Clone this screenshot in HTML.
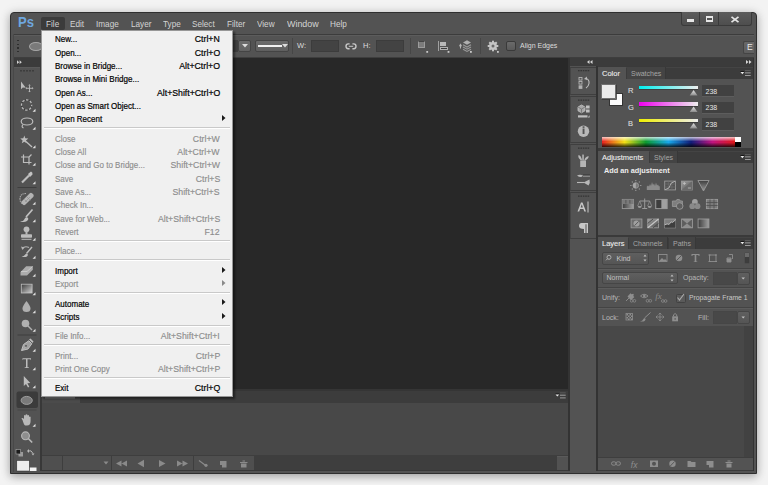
<!DOCTYPE html>
<html><head><meta charset="utf-8">
<style>
*{margin:0;padding:0;box-sizing:border-box}
html,body{width:768px;height:485px;overflow:hidden;background:#f3f3f3;font-family:"Liberation Sans",sans-serif;}
.a{position:absolute}
#win{left:10px;top:12px;width:747px;height:462px;background:#535353;border:1px solid #2f2f2f;border-radius:4px 4px 0 0;box-shadow:0 3px 9px rgba(0,0,0,0.28),0 0 12px rgba(0,0,0,0.10)}
.mt{color:#d4d4d4;font-size:9.2px;line-height:10px;top:19px;transform:scaleX(0.89);transform-origin:0 0}
#opt{left:14px;top:34px;width:740px;height:24px;background:#535353;border-top:1px solid #3c3c3c}
#doc{left:42px;top:58px;width:526px;height:331px;background:#282828}
.hdr{background:#3b3b3b}
.sep{width:1px;background:#464646}
.ot{color:#dcdcdc;font-size:7px;line-height:8px}
.inp{background:#434343;border:1px solid #3c3c3c}

.menu{left:41px;top:30px;width:192px;height:367px;background:#f0f0f0;border:1px solid #979797;box-shadow:2px 2px 2px rgba(0,0,0,0.45)}
.mi{left:55px;font-size:9px;line-height:10px;color:#000;white-space:nowrap;transform:scaleX(0.89);transform-origin:0 0;-webkit-text-stroke:0.2px #000}
.mi.dis{color:#8d8d8d;-webkit-text-stroke:0.15px #8d8d8d}
.sc{left:auto;right:548px;text-align:right;transform:scaleX(0.97);transform-origin:100% 0}
.msep{left:44px;width:186px;height:1px;background:#c9c9c9;border-bottom:1px solid #fff;box-sizing:content-box}

.grp{left:570px;width:26px;background:#535353;border-top:1px solid #3f3f3f;border-bottom:1px solid #3f3f3f;border-left:1px solid #454545}

.tabbar{left:598px;width:155px;background:#3c3c3c;border-top:1px solid #444}
.tab{height:12px;background:#444;color:#a6a6a6;font-size:7px;line-height:13px;padding-left:4px;white-space:nowrap;border-right:1px solid #383838;overflow:hidden}
.tab.act{background:#535353;color:#ececec;font-size:7.5px;line-height:13px;border:none;-webkit-text-stroke:0.1px #ececec}
.pbody{left:598px;width:155px;background:#535353}
.lbl{font-size:7.5px;color:#d8d8d8;line-height:8px;-webkit-text-stroke:0.15px #d8d8d8}
.inp2{left:702px;width:32px;background:#414141;border-bottom:1px solid #5d5d5d}
.num{left:705.5px;font-size:7px;color:#e6e6e6;line-height:8px}
.dd{background:linear-gradient(#5f5f5f,#555);border:1px solid #464646;border-radius:2px}
.ltx{font-size:7px;line-height:8px;white-space:nowrap}
</style></head><body>
<div id="win" class="a"></div>
<!-- Ps logo -->
<div class="a" style="left:18.3px;top:14px;font-size:14.5px;line-height:16px;font-weight:bold;color:#6ea6df;transform:scaleX(0.9);transform-origin:0 0">Ps</div>
<!-- menu bar -->
<div class="a" style="left:41px;top:17px;width:24px;height:13px;background:#3b3b3b;border-radius:2px"></div>
<div class="a mt" style="left:46px">File</div>
<div class="a mt" style="left:70px">Edit</div>
<div class="a mt" style="left:96px">Image</div>
<div class="a mt" style="left:131px">Layer</div>
<div class="a mt" style="left:162.5px">Type</div>
<div class="a mt" style="left:192px">Select</div>
<div class="a mt" style="left:226.5px">Filter</div>
<div class="a mt" style="left:257px">View</div>
<div class="a mt" style="left:287px;transform:scaleX(0.97)">Window</div>
<div class="a mt" style="left:330px">Help</div>
<!-- window controls -->
<div class="a" style="left:681px;top:12px;width:71px;height:14px;background:linear-gradient(#5c5c5c,#4e4e4e);border:1px solid #3a3a3a;border-top:none;border-radius:0 0 3px 3px"></div>
<div class="a" style="left:699px;top:12px;width:1px;height:13px;background:#3a3a3a"></div>
<div class="a" style="left:718px;top:12px;width:1px;height:13px;background:#3a3a3a"></div>
<div class="a" style="left:687px;top:19px;width:7px;height:3px;background:#e6e6e6"></div>
<div class="a" style="left:705.5px;top:16px;width:7.5px;height:6px;border:2px solid #e6e6e6;border-left-width:1.8px;border-right-width:1.8px"></div>
<svg class="a" style="left:730px;top:15px" width="10" height="9"><path d="M1.5 1.8L8.5 7.2M8.5 1.8L1.5 7.2" stroke="#e6e6e6" stroke-width="1.7"/></svg>

<!-- options bar -->
<div id="opt" class="a"></div>
<div class="a" style="left:14px;top:35px;width:740px;height:1px;background:#5c5c5c"></div>
<div class="a" style="left:14px;top:57px;width:740px;height:1px;background:#3e3e3e"></div>
<!-- grip dots -->
<div class="a" style="left:17px;top:40px;width:2px;height:13px;background:repeating-linear-gradient(#2e2e2e 0 1.5px,transparent 1.5px 3.5px)"></div>
<!-- ellipse tool icon -->
<div class="a" style="left:29px;top:42px;width:14px;height:9px;border-radius:50%;background:#7a7a7a;border:1px solid #a5a5a5"></div>
<!-- dropdowns -->
<div class="a" style="left:226px;top:40px;width:12px;height:12px;background:#3e3e3e"></div>
<div class="a" style="left:237.5px;top:39.5px;width:13.5px;height:12.5px;background:linear-gradient(#6c6c6c,#626262);border:1px solid #444;border-radius:2px"></div>
<svg class="a" style="left:242px;top:44px" width="6" height="4"><path d="M0 0H6L3 3.5Z" fill="#dcdcdc"/></svg>
<div class="a" style="left:255px;top:40px;width:34px;height:12px;background:linear-gradient(#6b6b6b,#5f5f5f);border:1px solid #444;border-radius:2px"></div>
<div class="a" style="left:258px;top:45px;width:24px;height:2px;background:#f0f0f0"></div>
<svg class="a" style="left:282px;top:44px" width="6" height="4"><path d="M0 0H6L3 3.5Z" fill="#dcdcdc"/></svg>
<div class="a sep" style="left:292px;top:38px;height:16px"></div>
<div class="a ot" style="left:297px;top:42px;font-size:7.5px">W:</div>
<div class="a inp" style="left:311px;top:40px;width:28px;height:12px"></div>
<svg class="a" style="left:0;top:0" width="768" height="485"><path d="M349.6 43.9H348.2Q346 43.9 346 46.3Q346 48.7 348.2 48.7H349.6M352.4 43.9H353.8Q356 43.9 356 46.3Q356 48.7 353.8 48.7H352.4" fill="none" stroke="#c8c8c8" stroke-width="1.4"/><path d="M348.8 46.3H353.2" stroke="#c8c8c8" stroke-width="1"/></svg>
<div class="a ot" style="left:363px;top:42px;font-size:7.5px">H:</div>
<div class="a inp" style="left:376px;top:40px;width:28px;height:12px"></div>
<div class="a sep" style="left:410px;top:38px;height:16px"></div>
<!-- path ops -->
<div class="a" style="left:417.7px;top:40.8px;width:7.6px;height:7.4px;background:#7c7c7c;border:1px solid #9c9c9c;border-top-color:#444"></div>
<svg class="a" style="left:0;top:0" width="768" height="485"><g fill="#c8c8c8"><rect x="426.3" y="51" width="1.8" height="1.8"/><rect x="447.6" y="51" width="1.8" height="1.8"/><rect x="470" y="51" width="1.8" height="1.8"/><rect x="497" y="51" width="1.8" height="1.8"/></g></svg>
<!-- align -->
<div class="a" style="left:438px;top:41px;width:1px;height:9.5px;background:#a0a0a0"></div>
<div class="a" style="left:440px;top:42px;width:5.5px;height:3.5px;background:#b8b8b8"></div>
<div class="a" style="left:440px;top:46.8px;width:8px;height:3.5px;background:#3c3c3c;border:1px solid #b0b0b0"></div>

<!-- arrange -->
<svg class="a" style="left:0;top:0" width="768" height="485"><path d="M460.5 48.5V44.5M459 45.8H462" stroke="#c0c0c0" stroke-width="0.9"/><path d="M459.5 44.8L460.5 43.5L461.5 44.8Z" fill="#c0c0c0"/>
<path d="M463 42.5L467 40.3L471 42.5L467 44.7Z" fill="#b0b0b0"/>
<path d="M463 44.8L467 47L471 44.8M463 47L467 49.2L471 47M463 49.2L467 51.4L471 49.2" fill="none" stroke="#9a9a9a" stroke-width="1.1"/></svg>
<div class="a sep" style="left:480px;top:38px;height:16px"></div>
<!-- gear -->
<svg class="a" style="left:0;top:0" width="768" height="485"><g fill="#c4c4c4"><circle cx="493" cy="46" r="3.9"/><rect x="492.00" y="40.70" width="2" height="2.2" transform="rotate(0 493 46)"/><rect x="492.00" y="40.70" width="2" height="2.2" transform="rotate(45 493 46)"/><rect x="492.00" y="40.70" width="2" height="2.2" transform="rotate(90 493 46)"/><rect x="492.00" y="40.70" width="2" height="2.2" transform="rotate(135 493 46)"/><rect x="492.00" y="40.70" width="2" height="2.2" transform="rotate(180 493 46)"/><rect x="492.00" y="40.70" width="2" height="2.2" transform="rotate(225 493 46)"/><rect x="492.00" y="40.70" width="2" height="2.2" transform="rotate(270 493 46)"/><rect x="492.00" y="40.70" width="2" height="2.2" transform="rotate(315 493 46)"/></g><circle cx="493" cy="46" r="1.5" fill="#6a6a6a"/></svg>
<div class="a" style="left:506px;top:41px;width:10px;height:10px;background:linear-gradient(#6a6a6a,#5a5a5a);border:1px solid #3a3a3a;border-radius:2px"></div>
<div class="a ot" style="left:520px;top:42px">Align Edges</div>
<div class="a" style="left:742.5px;top:40.5px;width:11px;height:13px;background:linear-gradient(#686868,#5e5e5e);border:1px solid #444;border-right:none;border-radius:2px 0 0 2px"></div>
<div class="a" style="left:747px;top:43px;color:#e8e8e8;font-size:8.5px;line-height:8px">E</div>

<!-- TOOLBAR -->
<div class="a" style="left:14px;top:58px;width:26px;height:8.6px;background:#3b3b3b"></div>
<div class="a" style="left:40px;top:58px;width:2px;height:413px;background:#383838"></div>
<div class="a" style="left:14px;top:67px;width:26px;height:1px;background:#5a5a5a"></div>
<div class="a" style="left:13px;top:34px;width:1px;height:438px;background:#484848"></div>
<svg class="a" style="left:0;top:0" width="768" height="485">
<g fill="#d0d0d0"><path d="M17 60.3L19.2 62.2L17 64.1ZM19.6 60.3L21.8 62.2L19.6 64.1Z"/></g>
<g fill="#3d3d3d"><rect x="20" y="70" width="2" height="1.5"/><rect x="23" y="70" width="2" height="1.5"/><rect x="26" y="70" width="2" height="1.5"/><rect x="29" y="70" width="2" height="1.5"/><rect x="32" y="70" width="2" height="1.5"/></g>
<g fill="#bcbcbc" stroke="#bcbcbc">
<!-- move -->
<path d="M21 81.5V89.2L22.8 87.6L25.8 87.8Z" stroke="none"/>
<path d="M29.5 85.3V91.3M26.5 88.3H32.5" stroke-width="0.9" fill="none"/>
<path d="M28.2 85.6L29.5 84.3L30.8 85.6ZM28.2 91L29.5 92.3L30.8 91ZM26.8 87L25.5 88.3L26.8 89.6ZM32.2 87L33.5 88.3L32.2 89.6Z" stroke="none"/>
</g>
<g fill="none" stroke="#bcbcbc" stroke-width="1.2">
<!-- marquee -->
<circle cx="26.6" cy="105" r="5.1" stroke="#3a3a3a" stroke-width="1.3"/><circle cx="26.6" cy="105" r="5.1" stroke-width="1.3" stroke-dasharray="2.5 1.5" stroke-dashoffset="1.2"/>
<!-- lasso -->
<ellipse cx="27" cy="121.5" rx="5.8" ry="3.5"/>
<path d="M23 124.5Q21 127 23.5 128"/>
</g>
<g fill="#e0e0e0">
<path d="M32.5 111.8L35.5 108.8V111.8Z M32.5 129.8L35.5 126.8V129.8Z M32.5 148.3L35.5 145.3V148.3Z M32.5 165.8L35.5 162.8V165.8Z M32.5 184.3L35.5 181.3V184.3Z"/>
<path d="M32.5 204.8L35.5 201.8V204.8Z M32.5 222.3L35.5 219.3V222.3Z M32.5 240.8L35.5 237.8V240.8Z M32.5 258.8L35.5 255.8V258.8Z M32.5 276.8L35.5 273.8V276.8Z M32.5 295.3L35.5 292.3V295.3Z M32.5 313.3L35.5 310.3V313.3Z M32.5 331.8L35.5 328.8V331.8Z"/>
<path d="M32.5 351.8L35.5 348.8V351.8Z M32.5 370.3L35.5 367.3V370.3Z M32.5 388.3L35.5 385.3V388.3Z M32.5 406.8L35.5 403.8V406.8Z M32.5 426.8L35.5 423.8V426.8Z"/>
</g>
<!-- wand -->
<path d="M24.3 135.5L25.3 138.3L28.3 138.5L26 140.4L26.8 143.3L24.3 141.7L21.8 143.3L22.6 140.4L20.3 138.5L23.3 138.3Z" fill="#bdbdbd"/>
<path d="M26 141.5L32 147" stroke="#bdbdbd" stroke-width="1.4"/>
<!-- crop -->
<path d="M23.5 154.5V162.5H31.5M21 157H29V164.5M29 157L31.5 154.5" fill="none" stroke="#bdbdbd" stroke-width="1.2"/>
<!-- eyedropper -->
<path d="M22 182.5L29 175.5" stroke="#bdbdbd" stroke-width="2.2" fill="none"/>
<path d="M28 174L31 171.5Q33 172.5 32.5 174.5L30 177Z" fill="#c4c4c4"/>
<rect x="17.5" y="187" width="19" height="1" fill="#3e3e3e"/>
<!-- heal -->
<path d="M21.8 201.2L29.8 193.2Q31 192.2 32.3 193.5L33.3 194.6Q34.3 195.8 33.2 197L25.2 204.8Q24 205.8 22.8 204.6L21.8 203.6Q20.8 202.4 21.8 201.2Z" fill="#b4b4b4"/><path d="M24.5 199.5L28 203M27 197L30.5 200.5M25 202L30 197" stroke="#8a8a8a" stroke-width="0.6"/>
<path d="M26 193.5Q20 193.5 20 199Q20 202 22 203.5" fill="none" stroke="#a8a8a8" stroke-width="1.2" stroke-dasharray="1.3 0.8"/>
<!-- brush -->
<path d="M26 217L32.5 209.5" stroke="#c0c0c0" stroke-width="1.7"/>
<path d="M20 221.5Q23.5 221.5 24.5 219Q25.5 216.3 27.6 217.6Q29.2 219.2 27 221Q24.5 222.8 20 221.5Z" fill="#c0c0c0"/>
<!-- stamp -->
<circle cx="26.5" cy="229.3" r="2.9" fill="#bcbcbc"/>
<rect x="25.5" y="231" width="2" height="3.5" fill="#b8b8b8"/>
<rect x="21" y="234.3" width="11" height="3.4" rx="0.8" fill="#bcbcbc"/>
<rect x="21.5" y="238.8" width="10" height="1" fill="#b8b8b8"/>
<!-- history brush -->
<path d="M26.5 253.5L32 247" stroke="#bdbdbd" stroke-width="1.4"/>
<path d="M21.5 256.5Q24 256.5 25 254.8Q26 253 27.5 254Q28.5 255.5 26.5 256.8Q24.5 257.5 21.5 256.5Z" fill="#bdbdbd"/>
<path d="M22 248.5Q25 245.5 29 247.5" fill="none" stroke="#b5b5b5" stroke-width="1.1"/>
<path d="M21 246.5L22.5 250L24.5 247.5Z" fill="#b5b5b5"/>
<!-- eraser -->
<path d="M20.5 272L26.2 266.3H32.8V269.8L27 275.6H20.5Z" fill="#acacac"/>
<path d="M21 271.5H27L32.5 266.5" fill="none" stroke="#cfcfcf" stroke-width="0.8"/>
<!-- gradient -->
<defs><linearGradient id="gr" x1="0" y1="0" x2="1" y2="1"><stop offset="0" stop-color="#3a3a3a"/><stop offset="1" stop-color="#d0d0d0"/></linearGradient></defs>
<rect x="21.3" y="284.2" width="10.8" height="8.8" fill="url(#gr)" stroke="#c0c0c0" stroke-width="0.8"/>
<!-- blur -->
<path d="M26.5 301Q30.5 306 30.5 308.5Q30.5 312 26.5 312Q22.5 312 22.5 308.5Q22.5 306 26.5 301Z" fill="#b0b0b0"/>
<!-- dodge -->
<circle cx="25.5" cy="323.5" r="3.8" fill="#b0b0b0"/>
<path d="M28 326L32 330" stroke="#b0b0b0" stroke-width="1.4"/>
<rect x="17.5" y="334.5" width="19" height="1" fill="#3e3e3e"/>
<!-- pen -->
<path d="M21.5 350.5L23.5 344.5L28.8 340.8L31.8 343.8L28 349Z" fill="#a0a0a0" stroke="#c0c0c0" stroke-width="1"/><circle cx="26" cy="346" r="1" fill="#535353"/>
<path d="M29 339.5L30.5 338.5L33.5 341.5L32.5 343Z" fill="#bdbdbd"/>
<path d="M22 350.5L26 346.5" stroke="#bdbdbd" stroke-width="0.8"/>
<!-- type -->
<path d="M22.5 358.3H31V360.3L30.3 359.3H27.5V367.3H28.8V368H24.7V367.3H26V359.3H23.2L22.5 360.3Z" fill="#bdbdbd"/>
<!-- path selection -->
<path d="M23.8 376V386L26 384L28 387.5L29.3 386.8L27.4 383.3L30.3 383Z" fill="#bdbdbd"/>
<!-- selected ellipse -->
<rect x="16.5" y="391.5" width="21.5" height="16.5" rx="2" fill="#3b3b3b"/>
<ellipse cx="26.7" cy="400.4" rx="5.6" ry="4" fill="#7a7a7a" stroke="#a5a5a5" stroke-width="0.9"/>
<rect x="17.5" y="409.5" width="19" height="1" fill="#464646"/>
<!-- hand -->
<path d="M22.5 420Q21 418.5 21.8 418Q22.7 417.5 24 419V416Q24 415 24.8 415Q25.6 415 25.6 416V418.8V415Q25.6 414.3 26.5 414.3Q27.4 414.3 27.4 415V418.8V415.7Q27.4 415 28.2 415Q29 415 29 415.7V419V417Q29 416.4 29.8 416.4Q30.6 416.4 30.6 417V421Q30.6 425.5 27 425.5H25.5Q24 425.5 22.5 420Z" fill="#b8b8b8"/>
<!-- zoom -->
<circle cx="25.5" cy="435.8" r="3.9" fill="#8e8e8e" stroke="#b8b8b8" stroke-width="1.1"/>
<path d="M28.3 438.5L32.2 442.5" stroke="#b8b8b8" stroke-width="1.6"/>
<!-- default colors -->
<rect x="18.5" y="452" width="4.5" height="4.5" fill="#9a9a9a"/>
<rect x="16" y="449.5" width="4.5" height="4.5" fill="#1c1c1c" stroke="#aaa" stroke-width="0.6"/>
<path d="M28 451Q31.5 449.5 33 453.5" fill="none" stroke="#b8b8b8" stroke-width="1"/>
<path d="M27 451L29 449V453Z M31.5 453.5H34.5L33 455.5Z" fill="#b8b8b8"/>
<!-- swatches -->
<rect x="29.5" y="467.5" width="7" height="3.5" fill="#f4f4f4"/>
<rect x="16.8" y="460.5" width="12.5" height="10.5" fill="#eeeeee" stroke="#2a2a2a" stroke-width="0.5"/>
</svg>

<!-- doc -->
<div id="doc" class="a"></div>
<!-- DOC/TIMELINE -->
<div class="a" style="left:42px;top:389px;width:526px;height:2px;background:#353535"></div>
<div class="a" style="left:42px;top:391px;width:526px;height:12px;background:#3c3c3c"></div>
<div class="a" style="left:42px;top:390px;width:38px;height:13px;background:#4b4b4b"></div>
<div class="a" style="left:42px;top:403px;width:526px;height:52px;background:#484848"></div>
<div class="a" style="left:42px;top:455px;width:526px;height:15px;background:#3e3e3e"></div>
<div class="a" style="left:42px;top:456px;width:20px;height:14px;background:#4f4f4f"></div>
<div class="a" style="left:63px;top:456px;width:48px;height:14px;background:#4f4f4f"></div>
<div class="a" style="left:112px;top:456px;width:81px;height:14px;background:#4f4f4f"></div>
<div class="a" style="left:194px;top:456px;width:60px;height:14px;background:#4f4f4f"></div>
<div class="a" style="left:42px;top:470px;width:526px;height:1px;background:#383838"></div>
<div class="a" style="left:557px;top:456px;width:11px;height:14px;background:#525252;border-top:1px solid #5a5a5a"></div>
<svg class="a" style="left:0;top:0" width="768" height="485">
<g fill="#8a8a8a">
<path d="M103.5 461.5H108.5L106 464.5Z"/>
<path d="M116 463.5L121.5 460.5V466.5Z M121.5 463.5L127 460.5V466.5Z"/>
<path d="M137.5 463.5L144 459.8V467.2Z"/>
<path d="M159 460V467L165.5 463.5Z"/>
<path d="M177 460.5V466.5L182.5 463.5Z M182.5 460.5V466.5L188 463.5Z"/>
<path d="M199 460.5L205 465" stroke="#8a8a8a" stroke-width="1.2"/>
<circle cx="206" cy="465.3" r="1.6"/>
<path d="M220 461H226.5V467.5H222V465H220Z"/>
<path d="M240 462H247.5V463H240Z M241 463.5H246.5V467.5H241Z M242.5 460.5H245V461.5H242.5Z"/>
</g>
<!-- timeline panel menu -->

<rect x="45" y="397" width="30" height="1.5" fill="#a0a0a0" opacity="0.7"/>
</svg>

<!-- ICON STRIP -->
<div class="a" style="left:568px;top:58px;width:2px;height:413px;background:#333"></div>
<div class="a" style="left:570px;top:58px;width:184px;height:8px;background:#3b3b3b"></div>
<div class="a" style="left:596px;top:66px;width:2px;height:405px;background:#333"></div>
<div class="a" style="left:570px;top:66px;width:26px;height:405px;background:#535353"></div>
<div class="a grp" style="top:67px;height:28px"></div>
<div class="a grp" style="top:96px;height:47px"></div>
<div class="a grp" style="top:144px;height:47px"></div>
<div class="a grp" style="top:192px;height:47px"></div>
<svg class="a" style="left:0;top:0" width="768" height="485">
<g fill="#d8d8d8"><path d="M592.5 60L590 62L592.5 64ZM589.5 60L587 62L589.5 64Z"/>
<path d="M746 60L748.5 62L746 64ZM749 60L751.5 62L749 64Z"/></g>
<g fill="#353535"><rect x="578.0" y="70" width="1.6" height="1.3"/><rect x="580.4" y="70" width="1.6" height="1.3"/><rect x="582.8" y="70" width="1.6" height="1.3"/><rect x="585.2" y="70" width="1.6" height="1.3"/><rect x="587.6" y="70" width="1.6" height="1.3"/><rect x="578.0" y="99.5" width="1.6" height="1.3"/><rect x="580.4" y="99.5" width="1.6" height="1.3"/><rect x="582.8" y="99.5" width="1.6" height="1.3"/><rect x="585.2" y="99.5" width="1.6" height="1.3"/><rect x="587.6" y="99.5" width="1.6" height="1.3"/><rect x="578.0" y="147.5" width="1.6" height="1.3"/><rect x="580.4" y="147.5" width="1.6" height="1.3"/><rect x="582.8" y="147.5" width="1.6" height="1.3"/><rect x="585.2" y="147.5" width="1.6" height="1.3"/><rect x="587.6" y="147.5" width="1.6" height="1.3"/><rect x="578.0" y="195.5" width="1.6" height="1.3"/><rect x="580.4" y="195.5" width="1.6" height="1.3"/><rect x="582.8" y="195.5" width="1.6" height="1.3"/><rect x="585.2" y="195.5" width="1.6" height="1.3"/><rect x="587.6" y="195.5" width="1.6" height="1.3"/></g>
<!-- history -->
<g fill="none" stroke="#bcbcbc" stroke-width="0.8"><rect x="579" y="77.5" width="3" height="2.6"/><rect x="579" y="81.5" width="3" height="2.6"/></g>
<rect x="578.6" y="85.3" width="3.8" height="3.6" fill="#b0b0b0"/>
<path d="M586 78.5Q589.5 79.5 589 83.5Q588.5 86.5 586 88" fill="none" stroke="#bcbcbc" stroke-width="1.1"/>
<path d="M584 79L586.8 76.5L587.2 80Z" fill="#bcbcbc"/>
<!-- 3D -->
<path d="M578 107L581.5 105L585 107V110.8L581.5 112.8L578 110.8Z" fill="#a8a8a8" stroke="#c4c4c4" stroke-width="0.8"/>
<path d="M578 107L581.5 109L585 107M581.5 109V112.8" fill="none" stroke="#6a6a6a" stroke-width="0.7"/>
<rect x="586" y="105.5" width="3.6" height="3" fill="#c0c0c0"/><rect x="586" y="109.5" width="3.6" height="3" fill="#c0c0c0"/>
<rect x="578" y="115.3" width="9.5" height="2.2" fill="#c0c0c0"/><path d="M587.8 117.5L589.6 115.3V117.5Z" fill="#c0c0c0"/>
<!-- info -->
<circle cx="583.5" cy="131.3" r="5.7" fill="#b8b8b8"/>
<rect x="582.6" y="128.5" width="1.9" height="5.5" fill="#535353"/><rect x="582.6" y="126.3" width="1.9" height="1.6" fill="#535353"/>
<!-- brush presets -->
<rect x="580.2" y="160.5" width="5.8" height="6.5" fill="#b4b4b4"/>
<path d="M581 160.5Q577.5 157.5 578.5 155Q581 155.5 582 160Z" fill="#b8b8b8"/>
<path d="M582.3 160.5V155Q583 153.5 583.8 155V160.5Z" fill="#b8b8b8"/>
<path d="M584.3 160.5Q585 156.5 588.8 156.3Q588.5 159 584.8 160.8Z" fill="#b8b8b8"/>
<!-- brush panel -->
<path d="M577 175.5Q580 174 583 175.5Q581 178.5 577 175.5Z" fill="#b8b8b8"/>
<path d="M583 176H590" stroke="#b8b8b8" stroke-width="1"/><path d="M583 175H590" stroke="#2e2e2e" stroke-width="0.8"/>
<path d="M577 182.5H584" stroke="#b8b8b8" stroke-width="1.1"/>
<path d="M583.5 182.5L589.5 179.5Q590.5 183 588.5 185.5Z" fill="#b8b8b8"/>
<!-- character -->
<path d="M577.5 211.5L581 202.5H582.5L586 211.5H584.3L583.4 209H580.1L579.2 211.5ZM580.6 207.6H582.9L581.75 204.3Z" fill="#c8c8c8"/>
<rect x="587.5" y="201.5" width="1" height="11" fill="#c8c8c8"/>
<!-- paragraph -->
<path d="M581.5 223H588V233H586.5V224.3H585.5V233H584V229Q579 229 579 226Q579 223 581.5 223Z" fill="#c8c8c8"/>
</svg>

<!-- RIGHT PANELS -->
<div class="a" style="left:598px;top:66px;width:156px;height:405px;background:#3a3a3a"></div>
<div class="a" style="left:753px;top:58px;width:1px;height:413px;background:#333"></div>
<!-- color panel -->
<div class="a tabbar" style="top:67px;height:12px"></div>
<div class="a tab act" style="left:598px;top:67px;width:28px">Color</div>
<div class="a tab" style="left:627px;top:67px;width:39px">Swatches</div>
<div class="a pbody" style="top:79px;height:69px"></div>
<div class="a" style="left:609px;top:92.5px;width:13.5px;height:13.8px;background:#fcfcfc;border:1px solid #333"></div>
<div class="a" style="left:601.3px;top:84.3px;width:14.6px;height:14.6px;background:#ebebeb;border:0.7px solid #707070;box-shadow:0.8px 0.8px 0 #383838"></div>
<div class="a lbl" style="left:628px;top:87px">R</div>
<div class="a lbl" style="left:628px;top:103.5px">G</div>
<div class="a lbl" style="left:628px;top:120px">B</div>
<div class="a" style="left:638.5px;top:85.5px;width:59.5px;height:3.5px;background:linear-gradient(90deg,#00eeee,#eeeeee);box-shadow:0 1px 0 #3e3e3e"></div>
<div class="a" style="left:638.5px;top:102px;width:59.5px;height:3.5px;background:linear-gradient(90deg,#ee00ee,#eeeeee);box-shadow:0 1px 0 #3e3e3e"></div>
<div class="a" style="left:638.5px;top:118.5px;width:59.5px;height:3.5px;background:linear-gradient(90deg,#eeee00,#eeeeee);box-shadow:0 1px 0 #3e3e3e"></div>
<svg class="a" style="left:0;top:0" width="768" height="485">
<defs><linearGradient id="tri" x1="0" y1="0" x2="0" y2="1"><stop offset="0" stop-color="#e8e8e8"/><stop offset="1" stop-color="#8a8a8a"/></linearGradient></defs>
<path d="M693.6 90L697.5 95.5H689.7Z" fill="url(#tri)"/>
<path d="M693.6 106.5L697.5 112H689.7Z" fill="url(#tri)"/>
<path d="M693.6 123L697.5 128.5H689.7Z" fill="url(#tri)"/>
</svg>
<div class="a inp2" style="top:85px;height:12px"></div>
<div class="a inp2" style="top:101.5px;height:12px"></div>
<div class="a inp2" style="top:118px;height:12.5px"></div>
<div class="a num" style="top:87.5px">238</div>
<div class="a num" style="top:104px">238</div>
<div class="a num" style="top:120.5px">238</div>
<div class="a" style="left:602px;top:137px;width:133px;height:10px;background:linear-gradient(rgba(255,255,255,0.75),rgba(255,255,255,0) 45%,rgba(0,0,0,0) 55%,rgba(0,0,0,0.8)),linear-gradient(90deg,#e82020,#f2e018 17%,#0c9a30 33%,#18a8ea 50%,#101c78 67%,#c01480 83%,#e01818)"></div>
<div class="a" style="left:735px;top:137px;width:6px;height:5px;background:#fff"></div>
<div class="a" style="left:735px;top:142px;width:6px;height:5px;background:#000"></div>
<!-- adjustments -->
<div class="a tabbar" style="top:151px;height:12px"></div>
<div class="a tab act" style="left:598px;top:151px;width:51px">Adjustments</div>
<div class="a tab" style="left:650px;top:151px;width:28px">Styles</div>
<div class="a pbody" style="top:163px;height:72px"></div>
<div class="a" style="left:604px;top:167px;font-size:7.3px;font-weight:bold;color:#eeeeee;line-height:8px">Add an adjustment</div>
<svg class="a" style="left:0;top:0" width="768" height="485">
<defs><linearGradient id="gm" x1="0" x2="1"><stop offset="0" stop-color="#3e3e3e"/><stop offset="1" stop-color="#a0a0a0"/></linearGradient>
<linearGradient id="gd" x1="0" y1="0" x2="1" y2="1"><stop offset="0" stop-color="#a0a0a0"/><stop offset="1" stop-color="#505050"/></linearGradient>
<linearGradient id="gv" x1="0" y1="0" x2="0" y2="1"><stop offset="0" stop-color="#3e3e3e"/><stop offset="1" stop-color="#9a9a9a"/></linearGradient></defs>
<circle cx="635.8" cy="185.5" r="2.8" fill="#7a7a7a" stroke="#9a9a9a" stroke-width="0.9"/><path d="M635.8 182.7A2.8 2.8 0 0 0 635.8 188.3Z" fill="#a8a8a8"/>
<path d="M640.10 185.50L641.40 185.50M638.84 188.54L639.76 189.46M635.80 189.80L635.80 191.10M632.76 188.54L631.84 189.46M631.50 185.50L630.20 185.50M632.76 182.46L631.84 181.54M635.80 181.20L635.80 179.90M638.84 182.46L639.76 181.54" stroke="#9a9a9a" stroke-width="1.1"/>
<path d="M646.8 190.0V186.5L648.0 185.5L649.0 186.5L650.0 184.0L651.0 186.0L652.0 182.0L653.0 185.0L654.0 183.5L655.0 186.0L656.0 182.5L657.0 185.5L658.0 184.5L659.0 186.5L659.8 186.0V190.0Z" fill="#8a8a8a"/>
<rect x="664.70" y="181.10" width="10.8" height="8.8" fill="none" stroke="#9a9a9a" stroke-width="0.9"/><path d="M664.7 184.0H675.5M664.7 187.0H675.5M668.3000000000001 181.1V189.9M671.9 181.1V189.9" stroke="#6e6e6e" stroke-width="0.7"/><path d="M665.1 189.7Q670.1 188.5 670.1 185.5Q670.1 182.5 675.1 181.3" fill="none" stroke="#b0b0b0" stroke-width="1"/>
<rect x="681.5" y="181.1" width="10.8" height="8.8" fill="url(#gd)"/><rect x="681.50" y="181.10" width="10.8" height="8.8" fill="none" stroke="#9a9a9a" stroke-width="0.9"/><path d="M681.5 189.9L692.3 181.1L692.3 189.9Z" fill="#6a6a6a"/><path d="M682.9 183.5H685.9M684.4 182.0V185.0M687.9 188.0H690.9" stroke="#c0c0c0" stroke-width="0.8"/>
<path d="M697.9 180.5H709.1L703.5 191.0Z" fill="url(#gv)" stroke="#9a9a9a" stroke-width="0.9"/>
<rect x="622.3" y="199.4" width="11.2" height="9.2" fill="url(#gm)"/><rect x="622.30" y="199.40" width="11.2" height="9.2" fill="none" stroke="#9a9a9a" stroke-width="0.9"/><path d="M622.3 199.4H633.5V204H622.3Z" fill="#7a7a7a"/><path d="M625.9 200V203.5M629.9 200V203.5" stroke="#535353" stroke-width="0.9"/>
<path d="M644.7 198.5V208M639.7 201H649.7M642.2 208.5H647.2" stroke="#9a9a9a" stroke-width="1"/><path d="M639.7 201L637.7 206M639.7 201L641.7 206M649.7 201L647.7 206M649.7 201L651.7 206" stroke="#9a9a9a" stroke-width="0.7"/><path d="M637.7 206A2 2 0 0 0 641.7 206ZM647.7 206A2 2 0 0 0 651.7 206Z" fill="#9a9a9a"/>
<rect x="655.80" y="199.40" width="11.2" height="9.2" fill="none" stroke="#9a9a9a" stroke-width="0.9"/><rect x="655.8" y="199.4" width="5.6" height="9.2" fill="#3e3e3e"/><rect x="661.4" y="199.4" width="5.6" height="9.2" fill="#a0a0a0"/><rect x="655.80" y="199.40" width="11.2" height="9.2" fill="none" stroke="#9a9a9a" stroke-width="0.9"/>
<path d="M672.4 201H675.9L676.9 199.5H679.4L680.4 201H682.4V206.5H672.4Z" fill="#7e7e7e" stroke="#9a9a9a" stroke-width="0.8"/><circle cx="679.6999999999999" cy="206" r="3.3" fill="#5e5e5e" stroke="#9a9a9a" stroke-width="0.9"/>
<circle cx="694.9" cy="202" r="2.9" fill="#a0a0a0"/><circle cx="692.3" cy="206.2" r="2.9" fill="#8a8a8a"/><circle cx="697.5" cy="206.2" r="2.9" fill="#8a8a8a"/><path d="M693.4 203.5L694.9 205.5L696.4 203.5" fill="#6a6a6a"/>
<rect x="706.4" y="199.4" width="11.2" height="9.2" fill="#7a7a7a"/><rect x="706.40" y="199.40" width="11.2" height="9.2" fill="none" stroke="#9a9a9a" stroke-width="0.9"/><path d="M706.4 202.5H717.6M706.4 205.5H717.6M710 199.4V208.6M714 199.4V208.6" stroke="#535353" stroke-width="0.9"/>
<rect x="631.1" y="219.0" width="10.8" height="8.8" fill="#6e6e6e"/><rect x="631.10" y="219.00" width="10.8" height="8.8" fill="none" stroke="#9a9a9a" stroke-width="0.9"/><circle cx="636.5" cy="223.4" r="3" fill="#a0a0a0"/><path d="M634.5 225.6L638.7 221.4" stroke="#535353" stroke-width="0.9"/>
<rect x="647.7" y="219.0" width="10.8" height="8.8" fill="url(#gd)"/><rect x="647.70" y="219.00" width="10.8" height="8.8" fill="none" stroke="#9a9a9a" stroke-width="0.9"/><path d="M647.7 227.8L658.5 219.0" stroke="#c8c8c8" stroke-width="1.1"/><path d="M647.7 223.4L653.1 219.0M653.1 227.8L658.5 223.4" stroke="#4a4a4a" stroke-width="0.9"/>
<rect x="664.7" y="219.0" width="10.8" height="8.8" fill="#7e7e7e"/><rect x="664.70" y="219.00" width="10.8" height="8.8" fill="none" stroke="#9a9a9a" stroke-width="0.9"/><path d="M664.7 227.8V224.9L667.1 223.9L669.1 224.4L671.1 221.9L672.6 222.4L675.5 219.9V227.8Z" fill="#3e3e3e"/><path d="M664.7 224.9L667.1 223.9L669.1 224.4L671.1 221.9L672.6 222.4L675.5 219.9" fill="none" stroke="#c0c0c0" stroke-width="0.9"/>
<rect x="681.6" y="219.0" width="10.8" height="8.8" fill="#5e5e5e"/><path d="M681.6 219.0L687 223.4L692.4 219.0ZM681.6 227.8L687 223.4L692.4 227.8Z" fill="#8e8e8e"/><rect x="681.60" y="219.00" width="10.8" height="8.8" fill="none" stroke="#9a9a9a" stroke-width="0.9"/>
<rect x="698.1" y="219.0" width="10.8" height="8.8" fill="url(#gm)"/><rect x="698.10" y="219.00" width="10.8" height="8.8" fill="none" stroke="#9a9a9a" stroke-width="0.9"/>
</svg>
<!-- layers -->
<div class="a tabbar" style="top:237px;height:12px"></div>
<div class="a tab act" style="left:598px;top:237px;width:30px">Layers</div>
<div class="a tab" style="left:629px;top:237px;width:39px">Channels</div>
<div class="a tab" style="left:669px;top:237px;width:27px">Paths</div>
<div class="a pbody" style="top:249px;height:77px"></div>
<div class="a dd" style="left:601.5px;top:252px;width:47.5px;height:13px"></div>
<div class="a ltx" style="left:616.5px;top:254.5px;color:#c8c8c8">Kind</div>
<div class="a" style="left:598px;top:268px;width:155px;height:1px;background:#444"></div>
<div class="a" style="left:598px;top:269px;width:155px;height:1px;background:#5c5c5c"></div>
<div class="a dd" style="left:601.5px;top:272px;width:76.5px;height:12px"></div>
<div class="a ltx" style="left:606.5px;top:273.8px;color:#c0c0c0">Normal</div>
<div class="a ltx" style="left:683px;top:273.8px;color:#b8b8b8">Opacity:</div>
<div class="a" style="left:713px;top:271.5px;width:24px;height:13px;background:#484848;border:1px solid #464646"></div>
<div class="a dd" style="left:737px;top:271.5px;width:13px;height:13px"></div>
<div class="a" style="left:598px;top:287px;width:155px;height:1px;background:#444"></div>
<div class="a" style="left:598px;top:288px;width:155px;height:1px;background:#5c5c5c"></div>
<div class="a ltx" style="left:602px;top:294px;color:#b8b8b8">Unify:</div>
<div class="a" style="left:676px;top:293.5px;width:9.5px;height:9.5px;background:#5a5a5a;border:1px solid #424242;border-radius:1.5px"></div>
<div class="a ltx" style="left:689px;top:294px;color:#c8c8c8;font-size:6.8px">Propagate Frame 1</div>
<div class="a" style="left:598px;top:306.5px;width:155px;height:1px;background:#444"></div>
<div class="a" style="left:598px;top:307.5px;width:155px;height:1px;background:#5c5c5c"></div>
<div class="a ltx" style="left:602px;top:313.5px;color:#b8b8b8">Lock:</div>
<div class="a ltx" style="left:683px;top:313.5px;color:#b8b8b8;left:698px">Fill:</div>
<div class="a" style="left:713px;top:310.5px;width:24px;height:13px;background:#484848;border:1px solid #464646"></div>
<div class="a dd" style="left:737px;top:310.5px;width:13px;height:13px"></div>
<div class="a" style="left:598px;top:326px;width:146px;height:131px;background:#484848"></div>
<div class="a" style="left:744px;top:326px;width:9px;height:131px;background:#424242"></div>
<div class="a" style="left:598px;top:457px;width:155px;height:1px;background:#3e3e3e"></div>
<div class="a" style="left:598px;top:458px;width:155px;height:12px;background:#535353"></div>
<svg class="a" style="left:0;top:0" width="768" height="485">
<g fill="#8e8e8e" stroke="#8e8e8e">
<!-- panel menu icons -->
<rect x="740.5" y="71.1" width="3.7" height="0.9" fill="#111" stroke="none"/><path d="M740.5 72.1H744.2L742.35 74.2Z" fill="#e8e8e8" stroke="none"/><rect x="745" y="70.0" width="5.7" height="0.9" fill="#5e5e5e" stroke="none"/><rect x="745" y="72.2" width="5.7" height="1.3" fill="#8a8a8a" stroke="none"/><rect x="745" y="75.0" width="5.7" height="1.0" fill="#9a9a9a" stroke="none"/><rect x="740.5" y="155.10000000000002" width="3.7" height="0.9" fill="#111" stroke="none"/><path d="M740.5 156.10000000000002H744.2L742.35 158.20000000000002Z" fill="#e8e8e8" stroke="none"/><rect x="745" y="154.0" width="5.7" height="0.9" fill="#5e5e5e" stroke="none"/><rect x="745" y="156.2" width="5.7" height="1.3" fill="#8a8a8a" stroke="none"/><rect x="745" y="159.0" width="5.7" height="1.0" fill="#9a9a9a" stroke="none"/><rect x="740.5" y="241.10000000000002" width="3.7" height="0.9" fill="#111" stroke="none"/><path d="M740.5 242.10000000000002H744.2L742.35 244.20000000000002Z" fill="#e8e8e8" stroke="none"/><rect x="745" y="240.0" width="5.7" height="0.9" fill="#5e5e5e" stroke="none"/><rect x="745" y="242.2" width="5.7" height="1.3" fill="#8a8a8a" stroke="none"/><rect x="745" y="245.0" width="5.7" height="1.0" fill="#9a9a9a" stroke="none"/><rect x="555.5" y="393.5" width="3.7" height="0.9" fill="#111" stroke="none"/><path d="M555.5 394.5H559.2L557.35 396.59999999999997Z" fill="#e8e8e8" stroke="none"/><rect x="560" y="392.4" width="5.7" height="0.9" fill="#5e5e5e" stroke="none"/><rect x="560" y="394.6" width="5.7" height="1.3" fill="#8a8a8a" stroke="none"/><rect x="560" y="397.4" width="5.7" height="1.0" fill="#9a9a9a" stroke="none"/>
<!-- kind row -->
<circle cx="609" cy="257.3" r="2" fill="none" stroke="#b8b8b8" stroke-width="0.9"/>
<path d="M607.5 258.8L606 260.3" stroke="#b8b8b8" stroke-width="0.9"/>
<path d="M643.5 256.5L645 254.5L646.5 256.5ZM643.5 259.5L645 261.5L646.5 259.5Z" fill="#c0c0c0" stroke="none"/>
<rect x="658.5" y="254.5" width="8.5" height="7" fill="none" stroke-width="0.9"/><path d="M659 261L662 258L664 260L665 259L667 261Z" stroke="none"/>
<circle cx="679" cy="258" r="3.3" stroke="none"/><path d="M676.5 260.5L681.5 255.5" stroke="#535353" stroke-width="0.9"/>
<path d="M691.5 254H699.5V256H698.8L698.2 255H696.3V261.5H697.3V262H693.7V261.5H694.7V255H692.8L692.2 256H691.5Z" stroke="none"/>
<rect x="709.5" y="255" width="6.5" height="6.5" fill="none" stroke-width="0.9"/><path d="M708.5 255H710.5M715 255H717M708.5 261.5H710.5M715 261.5H717" stroke-width="1.1"/>
<path d="M727 258H731V262H727Z M729 254.5H732.5V259" stroke-width="0.9" fill="none"/><rect x="727" y="258.5" width="4" height="3.5" stroke="none"/>
<rect x="745" y="253" width="4" height="10" fill="#3e3e3e" stroke="#3e3e3e" stroke-width="0.5"/><rect x="745" y="253" width="4" height="4" fill="#6a6a6a" stroke="none"/>
<!-- dropdown arrows -->
<path d="M670.5 276.5L672 274.5L673.5 276.5ZM670.5 279.5L672 281.5L673.5 279.5Z" fill="#c0c0c0" stroke="none"/>
<path d="M741.5 277.5H745L743.2 279.5Z M741.5 316.5H745L743.2 318.5Z" fill="#c0c0c0" stroke="none"/>
<!-- unify icons -->
<path d="M626 301L629 298" stroke-width="0.9"/>
<path d="M627.5 296.5L630.5 293.2L631.6 294.3L633.2 293.8L633.8 294.4L633.3 296L634.4 297.1L631 300.2Z" stroke="none"/>
<circle cx="631.6" cy="300.8" r="1.35" fill="none" stroke-width="0.75"/><circle cx="634.4" cy="300.8" r="1.35" fill="none" stroke-width="0.75"/>
<path d="M640.5 296Q644 292.5 648 296Q644 299.5 640.5 296Z" fill="none" stroke-width="0.9"/><circle cx="644.3" cy="295.9" r="1.3" stroke="none"/>
<circle cx="647.5" cy="300.8" r="1.35" fill="none" stroke-width="0.75"/><circle cx="650.3" cy="300.8" r="1.35" fill="none" stroke-width="0.75"/>
<text x="655.3" y="299" font-family="Liberation Serif" font-style="italic" font-size="9" fill="#8e8e8e" stroke="none">fx</text>
<circle cx="662.8" cy="301" r="1.35" fill="none" stroke-width="0.75"/><circle cx="665.6" cy="301" r="1.35" fill="none" stroke-width="0.75"/>
<path d="M677.5 297.5L679.5 300L684 294" fill="none" stroke="#a8a8a8" stroke-width="1.2"/>
<!-- lock icons -->
<rect x="626" y="313.5" width="6.5" height="6.5" fill="none" stroke-width="0.8"/>
<path d="M626.5 314H628V315.5H626.5ZM629.5 314H631V315.5H629.5ZM628 315.5H629.5V317H628ZM626.5 317H628V318.5H626.5ZM629.5 317H631V318.5H629.5ZM628 318.5H629.5V320H628ZM631 315.5H632.5V317H631ZM631 318.5H632.5V320H631Z" stroke="none"/>
<path d="M644.5 318L650.5 312.5" fill="none" stroke-width="1"/>
<path d="M640 321.3Q642.5 321.3 643.3 319.3Q644 317.6 645.3 318.6Q646.2 319.6 644.6 320.9Q643 321.8 640 321.3Z" stroke="none"/>
<path d="M656.5 317H663.5M660 313.5V320.5M658.5 314.5L660 313L661.5 314.5M658.5 319.5L660 321L661.5 319.5M657.5 315.5L656 317L657.5 318.5M662.5 315.5L664 317L662.5 318.5" fill="none" stroke-width="0.8"/>
<rect x="672.2" y="316.3" width="5.8" height="5" stroke="none"/><path d="M673.5 316.5V314.8Q675.1 312.3 676.7 314.8V316.5" fill="none" stroke-width="1"/><rect x="674.6" y="318" width="1" height="1.8" fill="#535353" stroke="none"/>
<!-- bottom bar -->
<path d="M612.5 463.5H615.5M617 463.5H620" fill="none" stroke-width="0.1"/>
<rect x="611.5" y="461.8" width="4.5" height="3.4" rx="1.7" fill="none" stroke-width="0.9"/><rect x="616" y="461.8" width="4.5" height="3.4" rx="1.7" fill="none" stroke-width="0.9"/>
<text x="630.8" y="467.5" font-family="Liberation Sans" font-style="italic" font-size="8.5" fill="#8e8e8e" stroke="none">fx</text>
<rect x="650" y="460.5" width="8" height="6.5" stroke="none"/><circle cx="654" cy="463.7" r="2" fill="#535353" stroke="none"/>
<circle cx="672.5" cy="463.7" r="3.2" stroke="none"/><path d="M670.3 466L674.7 461.4" stroke="#535353" stroke-width="0.9"/>
<path d="M687.5 461H690.5L691.5 462H695.5V467H687.5Z" stroke="none"/>
<path d="M706.5 461H713.5V467.5H709V465H706.5Z" stroke="none"/>
<path d="M725.5 462H732.5V463H725.5Z M726.5 463.5H731.5V467.5H726.5Z M727.5 460.5H730.5V461.5H727.5Z" stroke="none"/>
</g>
</svg>

<!-- MENU -->
<!-- MENUSTART -->
<div class="a menu"></div>
<div class="a mi" style="top:34.20px">New...</div>
<div class="a mi sc" style="top:34.20px">Ctrl+N</div>
<div class="a mi" style="top:47.53px">Open...</div>
<div class="a mi sc" style="top:47.53px">Ctrl+O</div>
<div class="a mi" style="top:60.86px">Browse in Bridge...</div>
<div class="a mi sc" style="top:60.86px">Alt+Ctrl+O</div>
<div class="a mi" style="top:74.19px">Browse in Mini Bridge...</div>
<div class="a mi" style="top:87.52px">Open As...</div>
<div class="a mi sc" style="top:87.52px">Alt+Shift+Ctrl+O</div>
<div class="a mi" style="top:100.85px">Open as Smart Object...</div>
<div class="a mi" style="top:114.18px">Open Recent</div>
<svg class="a" style="left:222px;top:115.08px" width="4" height="6"><path d="M0 0L3.5 3L0 6Z" fill="#1a1a1a"/></svg>
<div class="a msep" style="top:127.28px"></div>
<div class="a mi dis" style="top:133.61px">Close</div>
<div class="a mi dis sc" style="top:133.61px">Ctrl+W</div>
<div class="a mi dis" style="top:146.94px">Close All</div>
<div class="a mi dis sc" style="top:146.94px">Alt+Ctrl+W</div>
<div class="a mi dis" style="top:160.27px">Close and Go to Bridge...</div>
<div class="a mi dis sc" style="top:160.27px">Shift+Ctrl+W</div>
<div class="a mi dis" style="top:173.60px">Save</div>
<div class="a mi dis sc" style="top:173.60px">Ctrl+S</div>
<div class="a mi dis" style="top:186.93px">Save As...</div>
<div class="a mi dis sc" style="top:186.93px">Shift+Ctrl+S</div>
<div class="a mi dis" style="top:200.26px">Check In...</div>
<div class="a mi dis" style="top:213.59px">Save for Web...</div>
<div class="a mi dis sc" style="top:213.59px">Alt+Shift+Ctrl+S</div>
<div class="a mi dis" style="top:226.92px">Revert</div>
<div class="a mi dis sc" style="top:226.92px">F12</div>
<div class="a msep" style="top:240.02px"></div>
<div class="a mi dis" style="top:246.35px">Place...</div>
<div class="a msep" style="top:259.45px"></div>
<div class="a mi" style="top:265.78px">Import</div>
<svg class="a" style="left:222px;top:266.68px" width="4" height="6"><path d="M0 0L3.5 3L0 6Z" fill="#1a1a1a"/></svg>
<div class="a mi dis" style="top:279.11px">Export</div>
<svg class="a" style="left:222px;top:280.01px" width="4" height="6"><path d="M0 0L3.5 3L0 6Z" fill="#8a8a8a"/></svg>
<div class="a msep" style="top:292.21px"></div>
<div class="a mi" style="top:298.54px">Automate</div>
<svg class="a" style="left:222px;top:299.44px" width="4" height="6"><path d="M0 0L3.5 3L0 6Z" fill="#1a1a1a"/></svg>
<div class="a mi" style="top:311.87px">Scripts</div>
<svg class="a" style="left:222px;top:312.77px" width="4" height="6"><path d="M0 0L3.5 3L0 6Z" fill="#1a1a1a"/></svg>
<div class="a msep" style="top:324.97px"></div>
<div class="a mi dis" style="top:331.30px">File Info...</div>
<div class="a mi dis sc" style="top:331.30px">Alt+Shift+Ctrl+I</div>
<div class="a msep" style="top:344.40px"></div>
<div class="a mi dis" style="top:350.73px">Print...</div>
<div class="a mi dis sc" style="top:350.73px">Ctrl+P</div>
<div class="a mi dis" style="top:364.06px">Print One Copy</div>
<div class="a mi dis sc" style="top:364.06px">Alt+Shift+Ctrl+P</div>
<div class="a msep" style="top:377.16px"></div>
<div class="a mi" style="top:383.49px">Exit</div>
<div class="a mi sc" style="top:383.49px">Ctrl+Q</div>
<!-- MENUEND -->
</body></html>
